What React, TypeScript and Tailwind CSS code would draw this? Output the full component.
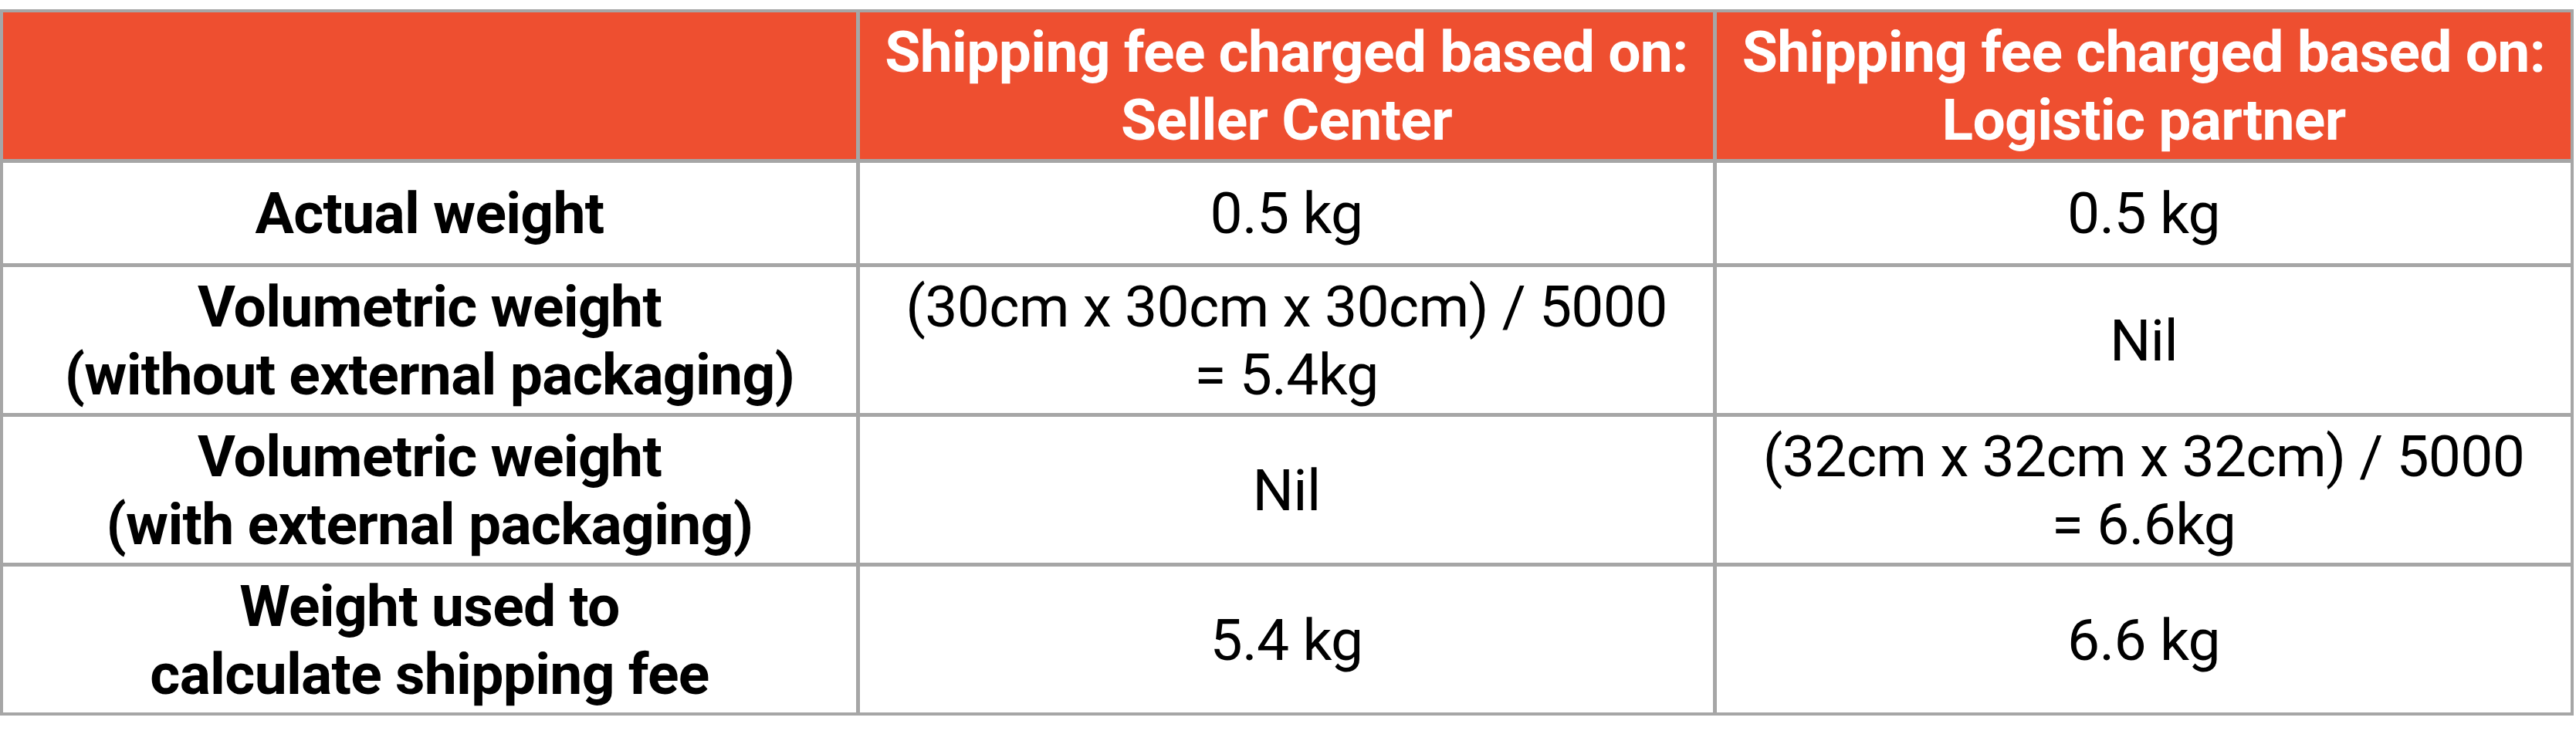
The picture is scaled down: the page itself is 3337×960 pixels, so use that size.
const rows: { label: string[]; seller: string[]; partner: string[] }[] = [
  { label: ["Actual weight"], seller: ["0.5 kg"], partner: ["0.5 kg"] },
  {
    label: ["Volumetric weight", "(without external packaging)"],
    seller: ["(30cm x 30cm x 30cm) / 5000", "= 5.4kg"],
    partner: ["Nil"],
  },
  {
    label: ["Volumetric weight", "(with external packaging)"],
    seller: ["Nil"],
    partner: ["(32cm x 32cm x 32cm) / 5000", "= 6.6kg"],
  },
  {
    label: ["Weight used to", "calculate shipping fee"],
    seller: ["5.4 kg"],
    partner: ["6.6 kg"],
  },
];

function Cell({ lines, className = "" }: { lines: string[]; className?: string }) {
  return (
    <div className={`flex flex-col items-center justify-center text-center ${className}`}>
      {lines.map((l, i) => (
        <div key={i} className="whitespace-nowrap">
          {l}
        </div>
      ))}
    </div>
  );
}

export default function App() {
  return (
    <main
      className="min-h-screen bg-white pt-[12px] text-black"
      style={{ fontFamily: "Roboto, 'Liberation Sans', sans-serif" }}
    >
      <div className="grid w-[3334px] grid-cols-[1105px_1105px_1106px] grid-rows-[190px_130px_189px_189px_189px] gap-[5px] border-[4px] border-[#a6a6a6] bg-[#a6a6a6] text-[75px] leading-[88px] tracking-[-0.7px]">
        <div className="bg-[#ee4f30]" />
        <Cell
          lines={["Shipping fee charged based on:", "Seller Center"]}
          className="bg-[#ee4f30] font-bold text-white"
        />
        <Cell
          lines={["Shipping fee charged based on:", "Logistic partner"]}
          className="bg-[#ee4f30] font-bold text-white"
        />
        {rows.map((r, i) => (
          <div key={i} className="contents">
            <Cell lines={r.label} className="bg-white font-bold" />
            <Cell lines={r.seller} className="bg-white" />
            <Cell lines={r.partner} className="bg-white" />
          </div>
        ))}
      </div>
    </main>
  );
}
